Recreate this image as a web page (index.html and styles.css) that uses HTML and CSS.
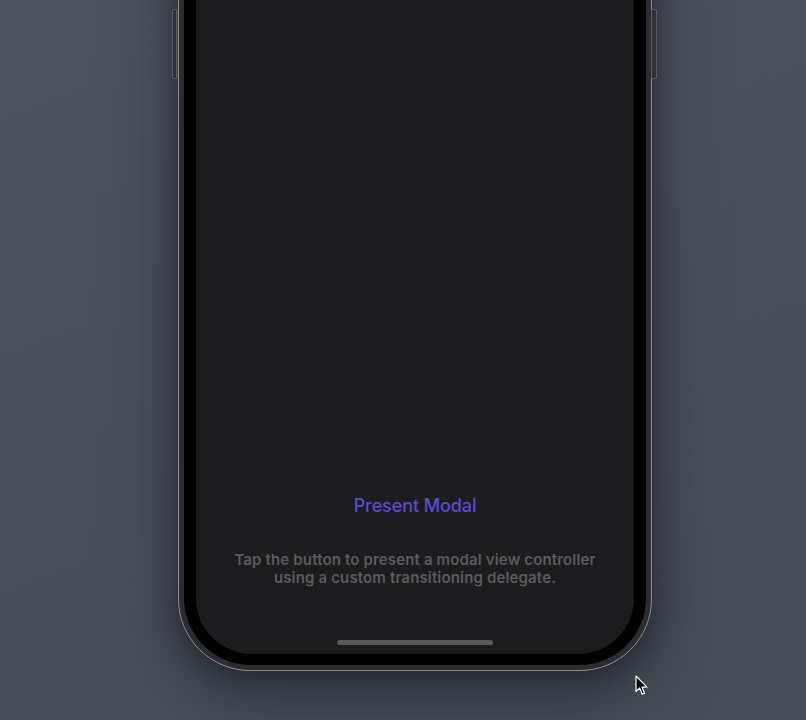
FILE: index.html
```html
<!DOCTYPE html>
<html lang="en">
<head>
<meta charset="utf-8">
<title>Present Modal</title>
<link rel="stylesheet" href="styles.css">
</head>
<body>
<div class="stage">
  <div class="phone">
    <span class="side-btn left"></span>
    <span class="side-btn right"></span>
    <div class="bezel">
      <div class="screen">
        <div class="present">Present Modal</div>
        <p class="caption">Tap the button to present a modal view controller<br>using a custom transitioning delegate.</p>
        <div class="home-indicator"></div>
      </div>
    </div>
  </div>
  <svg class="cursor" width="14" height="22" viewBox="0 0 14 22" aria-hidden="true">
    <path d="M1 1 L1 16.5 L4.6 13 L7.2 19.2 L9.6 18.2 L7 12.2 L12 12.2 Z" fill="#000" stroke="#fff" stroke-width="1.2" stroke-linejoin="round"/>
  </svg>
</div>
</body>
</html>
```
FILE: styles.css
```css
html, body {
  margin: 0;
  padding: 0;
  height: 100%;
}
body {
  background: linear-gradient(160deg, #4e545e 0%, #4a505a 50%, #464c56 100%);
  overflow: hidden;
  font-family: Inter, "Open Sans", "Liberation Sans", sans-serif;
}
.stage {
  position: relative;
  height: 720px;
  width: 806px;
  display: flex;
  justify-content: center;
  align-items: flex-end;
  padding-bottom: 49px;
  box-sizing: border-box;
  overflow: hidden;
}
.phone {
  position: relative;
  flex: none;
  width: 474px;
  height: 900px;
  box-sizing: border-box;
  margin-left: 24px;
  border: 1px solid #8d9095;
  background: #2b2c2f;
  border-radius: 0 0 72px 72px;
  padding: 0 5px 5px 5px;
  box-shadow: 0 22px 70px rgba(18, 22, 28, 0.55), 0 6px 20px rgba(18, 22, 28, 0.4);
}
.side-btn {
  position: absolute;
  top: 237px;
  width: 5px;
  height: 70px;
  background: #2e3034;
  border: 1px solid #5a5e64;
  box-sizing: border-box;
}
.side-btn.left { left: -7px; border-radius: 2px 0 0 2px; }
.side-btn.right { right: -6px; width: 6px; border-radius: 0 2px 2px 0; }
.bezel {
  height: 100%;
  box-sizing: border-box;
  background: #000;
  border-radius: 0 0 67px 67px;
  padding: 0 12px 11px 12px;
}
.screen {
  height: 100%;
  background: #1c1c1e;
  border-radius: 0 0 56px 56px;
  display: flex;
  flex-direction: column;
  align-items: center;
  justify-content: flex-end;
  padding-bottom: 9px;
  box-sizing: border-box;
}
.present {
  color: #5b49d8;
  font-size: 18px;
  font-weight: 500;
  line-height: 22px;
  letter-spacing: -0.1px;
}
.caption {
  margin: 34px 0 53px 0;
  color: #5b5b5f;
  font-size: 15px;
  font-weight: 600;
  line-height: 18px;
  text-align: center;
  letter-spacing: 0.15px;
}
.home-indicator {
  width: 156px;
  height: 5px;
  border-radius: 3px;
  background: #5a5a5d;
}
.cursor {
  position: absolute;
  left: 635px;
  top: 675px;
}
```
